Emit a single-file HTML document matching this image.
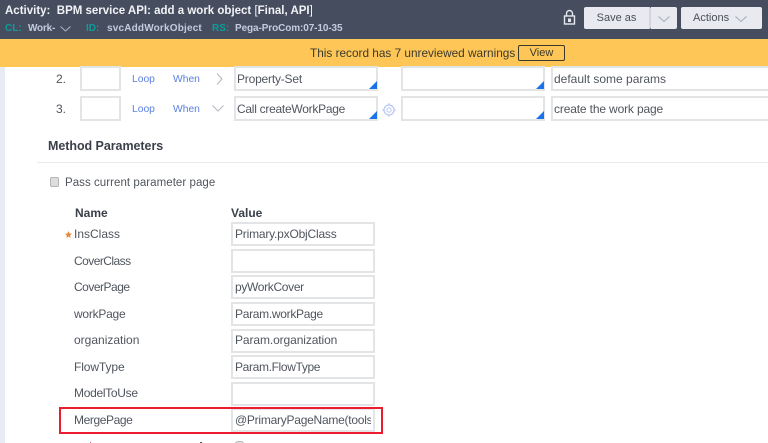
<!DOCTYPE html>
<html><head><meta charset="utf-8">
<style>
html,body{margin:0;padding:0;background:#fff}
#p{position:relative;width:768px;height:443px;overflow:hidden;background:#fff;font-family:"Liberation Sans",sans-serif;font-size:12px;color:#50555e;filter:blur(.25px)}
#p div,#p svg{position:absolute}
.t{white-space:nowrap;line-height:16px}
.b{box-sizing:border-box;border:2px solid #e3e4e6;background:#fff}
.tri{width:0;height:0;border-left:8px solid transparent;border-bottom:8px solid #1a73e8}
.btn{background:#e8eaef;border-radius:2px;height:22px;top:7px;color:#4a4f58;line-height:22px;text-align:center}
.l{color:#5b80e2;font-size:10.3px}
</style></head><body><div id="p">
<div style="left:0;top:0;width:768px;height:39px;background:#454d5e"></div>
<div style="left:0;top:39px;width:768px;height:28px;background:#fec657"></div>
<div style="left:0;top:67px;width:5px;height:376px;background:#e8ebf1"></div>

<div class="t" style="left:5px;top:3px;color:#f2f3f6;font-weight:bold;font-size:11.5px">Activity:&nbsp; BPM service API: add a work object <span style="font-weight:normal">[</span>Final, API<span style="font-weight:normal">]</span></div>
<div class="t" style="left:5px;top:21px;font-size:10px;font-weight:bold;color:#0f9c9c">CL:</div>
<div class="t" style="left:28px;top:21px;font-size:10px;font-weight:bold;color:#c3cbe0;letter-spacing:-.2px">Work-</div>
<svg style="left:60px;top:26px" width="11" height="6"><path d="M.5 .5L5.5 5L10.5 .5" fill="none" stroke="#aeb6c8"/></svg>
<div class="t" style="left:86px;top:21px;font-size:10px;font-weight:bold;color:#0f9c9c">ID:</div>
<div class="t" style="left:107px;top:21px;font-size:10px;font-weight:bold;color:#c3cbe0;letter-spacing:.18px">svcAddWorkObject</div>
<div class="t" style="left:212px;top:21px;font-size:10px;font-weight:bold;color:#0f9c9c">RS:</div>
<div class="t" style="left:235px;top:21px;font-size:10px;font-weight:bold;color:#c3cbe0;letter-spacing:-.1px">Pega-ProCom:07-10-35</div>

<svg style="left:563px;top:9px" width="13" height="16" viewBox="0 0 13 16"><path d="M3.5 7V4.5a3 3 0 0 1 6 0V7" fill="none" stroke="#e6e8ee" stroke-width="1.4"/><rect x="1.5" y="7" width="10" height="8" fill="none" stroke="#e6e8ee" stroke-width="1.4"/><rect x="5" y="9.5" width="3" height="3.5" fill="#e6e8ee"/></svg>
<div class="btn" style="left:584px;width:67px;border-right:2px solid #d3d6dc;box-sizing:border-box;font-size:11px">Save as</div>
<div class="btn" style="left:651px;width:26px;border-radius:0 2px 2px 0"></div>
<svg style="left:658px;top:16px" width="12" height="6"><path d="M.5 .5L6 5.5L11.5 .5" fill="none" stroke="#a4a9b4"/></svg>
<div class="btn" style="left:681px;width:81px;text-align:left;text-indent:12px;font-size:11px">Actions</div>
<svg style="left:735px;top:16px" width="12" height="6"><path d="M.5 .5L6 5.5L11.5 .5" fill="none" stroke="#a4a9b4"/></svg>

<div class="t" style="left:310px;top:45px;color:#3c3a2e;font-size:11.8px">This record has 7 unreviewed warnings</div>
<div class="t" style="left:518px;top:45px;width:47px;height:16px;box-sizing:border-box;border:1px solid #3c3a2e;border-radius:2px;text-align:center;line-height:15px;font-size:11px;color:#3c3a2e">View</div>

<div class="t" style="left:56px;top:71px">2.</div>
<div class="b" style="left:80px;top:66px;width:41px;height:25px"></div>
<div class="t l" style="left:132px;top:72px">Loop</div>
<div class="t l" style="left:173px;top:72px">When</div>
<svg style="left:216px;top:73px" width="7" height="12"><path d="M1 .5L6 6L1 11.5" fill="none" stroke="#b2b6be"/></svg>
<div class="b" style="left:234px;top:66px;width:144px;height:25px"></div>
<div class="t" style="left:237px;top:71px;letter-spacing:-.2px">Property-Set</div>
<div class="tri" style="left:369px;top:81px"></div>
<div class="b" style="left:401px;top:66px;width:144px;height:25px"></div>
<div class="tri" style="left:536px;top:81px"></div>
<div class="b" style="left:551px;top:66px;width:230px;height:25px"></div>
<div class="t" style="left:554px;top:71px">default some params</div>

<div class="t" style="left:56px;top:101px">3.</div>
<div class="b" style="left:80px;top:96px;width:41px;height:25px"></div>
<div class="t l" style="left:132px;top:102px">Loop</div>
<div class="t l" style="left:173px;top:102px">When</div>
<svg style="left:212px;top:105px" width="12" height="7"><path d="M.5 .5L6 6L11.5 .5" fill="none" stroke="#b2b6be"/></svg>
<div class="b" style="left:234px;top:96px;width:144px;height:25px"></div>
<div class="t" style="left:237px;top:101px;letter-spacing:-.27px">Call createWorkPage</div>
<div class="tri" style="left:369px;top:111px"></div>
<svg style="left:381px;top:102px" width="16" height="16" viewBox="0 0 16 16"><circle cx="8" cy="8" r="5" fill="none" stroke="#b8c6f4" stroke-width="1.2"/><circle cx="8" cy="8" r="2.2" fill="none" stroke="#b8c6f4"/><path d="M8 1v2M8 13v2M1 8h2M13 8h2" stroke="#b8c6f4"/></svg>
<div class="b" style="left:401px;top:96px;width:144px;height:25px"></div>
<div class="tri" style="left:536px;top:111px"></div>
<div class="b" style="left:551px;top:96px;width:230px;height:25px"></div>
<div class="t" style="left:554px;top:101px;letter-spacing:-.15px">create the work page</div>

<div class="t" style="left:48px;top:138px;font-size:12.5px;color:#3a3f4a;font-weight:bold;letter-spacing:-.05px">Method Parameters</div>
<div style="left:37px;top:162px;width:731px;height:1px;background:#e8ebf0"></div>
<div style="left:50px;top:177px;width:9px;height:10px;box-sizing:border-box;border:1px solid #b4b4b4;border-radius:2px;background:#dddde0"></div>
<div class="t" style="left:65px;top:175px;font-size:11.5px;letter-spacing:.05px">Pass current parameter page</div>
<div class="t" style="left:75px;top:205px;font-weight:bold;color:#3a3f4a">Name</div>
<div class="t" style="left:231px;top:205px;font-weight:bold;color:#3a3f4a">Value</div>

<svg style="left:65px;top:231px" width="7" height="7" viewBox="0 0 10 10"><path d="M5 0L6.5 3.5L10 4L7.3 6.2L8 10L5 8L2 10L2.7 6.2L0 4L3.5 3.5Z" fill="#e8873a"/></svg>
<div class="t" style="left:74px;top:226px">InsClass</div>
<div class="t" style="left:74px;top:253px;letter-spacing:-.55px">CoverClass</div>
<div class="t" style="left:74px;top:279px;letter-spacing:-.5px">CoverPage</div>
<div class="t" style="left:74px;top:306px;letter-spacing:-.25px">workPage</div>
<div class="t" style="left:74px;top:332px">organization</div>
<div class="t" style="left:74px;top:359px;letter-spacing:-.1px">FlowType</div>
<div class="t" style="left:74px;top:385px;letter-spacing:-.3px">ModelToUse</div>
<div class="t" style="left:74px;top:412px;letter-spacing:-.4px">MergePage</div>

<div class="b" style="left:231px;top:222px;width:144px;height:24px"></div>
<div class="b" style="left:231px;top:249px;width:144px;height:24px"></div>
<div class="b" style="left:231px;top:275px;width:144px;height:24px"></div>
<div class="b" style="left:231px;top:302px;width:144px;height:24px"></div>
<div class="b" style="left:231px;top:329px;width:144px;height:24px"></div>
<div class="b" style="left:231px;top:355px;width:144px;height:24px"></div>
<div class="b" style="left:231px;top:382px;width:144px;height:24px"></div>
<div class="b" style="left:231px;top:408px;width:144px;height:24px"></div>
<div class="t" style="left:235px;top:226px;letter-spacing:-.2px">Primary.pxObjClass</div>
<div class="t" style="left:235px;top:279px;letter-spacing:-.33px">pyWorkCover</div>
<div class="t" style="left:235px;top:306px;letter-spacing:-.3px">Param.workPage</div>
<div class="t" style="left:235px;top:332px;letter-spacing:-.1px">Param.organization</div>
<div class="t" style="left:235px;top:359px;letter-spacing:-.35px">Param.FlowType</div>
<div class="t" style="left:235px;top:412px;width:136px;overflow:hidden;letter-spacing:-.25px">@PrimaryPageName(tools)</div>

<div style="left:59px;top:407px;width:324px;height:27px;box-sizing:border-box;border:2px solid #ec1c2e"></div>
<div style="left:235px;top:441px;width:9px;height:9px;box-sizing:border-box;border:1px solid #b4b4b4;border-radius:3px;background:#e6e6e6"></div>
<div style="left:90px;top:442px;width:1px;height:1px;background:#b56a80"></div>
<div style="left:200px;top:442px;width:2px;height:1px;background:#555"></div>
</div></body></html>
